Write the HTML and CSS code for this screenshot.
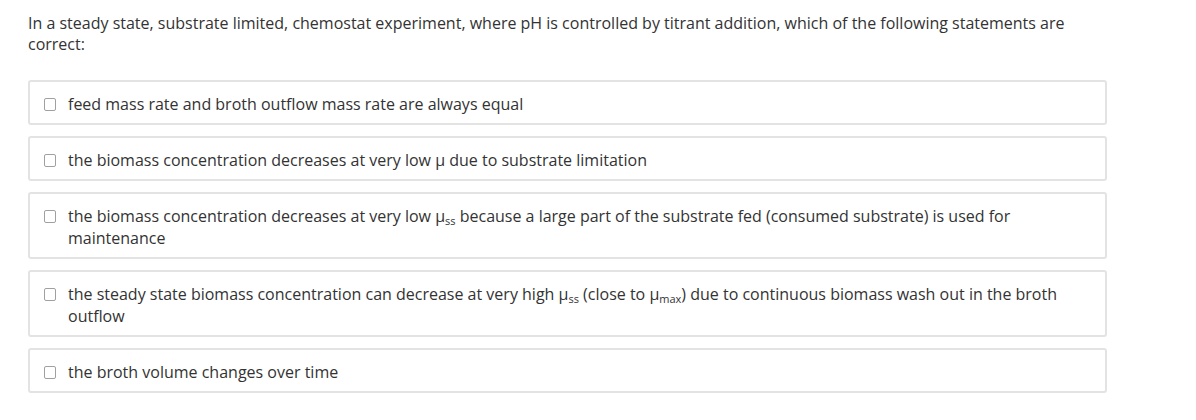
FILE: index.html
```html
<!DOCTYPE html>
<html>
<head>
<meta charset="utf-8">
<link rel="stylesheet" href="styles.css">
</head>
<body>
<div class="quiz">
  <p class="question">In a steady state, substrate limited, chemostat experiment, where pH is controlled by titrant addition, which of the following statements are correct:</p>
  <div class="options">
    <label class="option"><span class="check"></span><span class="text">feed mass rate and broth outflow mass rate are always equal</span></label>
    <label class="option"><span class="check"></span><span class="text">the biomass concentration decreases at very low μ due to substrate limitation</span></label>
    <label class="option"><span class="check"></span><span class="text">the biomass concentration decreases at very low μ<sub>ss</sub> because a large part of the substrate fed (consumed substrate) is used for maintenance</span></label>
    <label class="option"><span class="check"></span><span class="text">the steady state biomass concentration can decrease at very high μ<sub>ss</sub> (close to μ<sub>max</sub>) due to continuous biomass wash out in the broth outflow</span></label>
    <label class="option"><span class="check"></span><span class="text">the broth volume changes over time</span></label>
  </div>
</div>
</body>
</html>
```
FILE: styles.css
```css
html, body {
  margin: 0;
  padding: 0;
  background: #ffffff;
}
body {
  font-family: "Open Sans", "Liberation Sans", sans-serif;
  font-size: 16px;
  color: #333333;
}
.quiz {
  width: 1079px;
  padding: 13px 0 0 28px;
}
.question {
  margin: 0;
  line-height: 21px;
}
.options {
  margin-top: 25px;
  display: flex;
  flex-direction: column;
  gap: 11px;
}
.option {
  display: flex;
  align-items: flex-start;
  border: 2px solid #e3e3e3;
  border-radius: 3px;
  padding: 11px 14px 8px 14px;
  line-height: 22px;
}
.check {
  flex: none;
  width: 10px;
  height: 11px;
  border: 1px solid #a0a0a0;
  border-radius: 2px;
  margin-top: 5px;
  margin-right: 12px;
  background: #fff;
}
.text sub {
  font-size: 11px;
  line-height: 0;
  vertical-align: -3px;
}
```
